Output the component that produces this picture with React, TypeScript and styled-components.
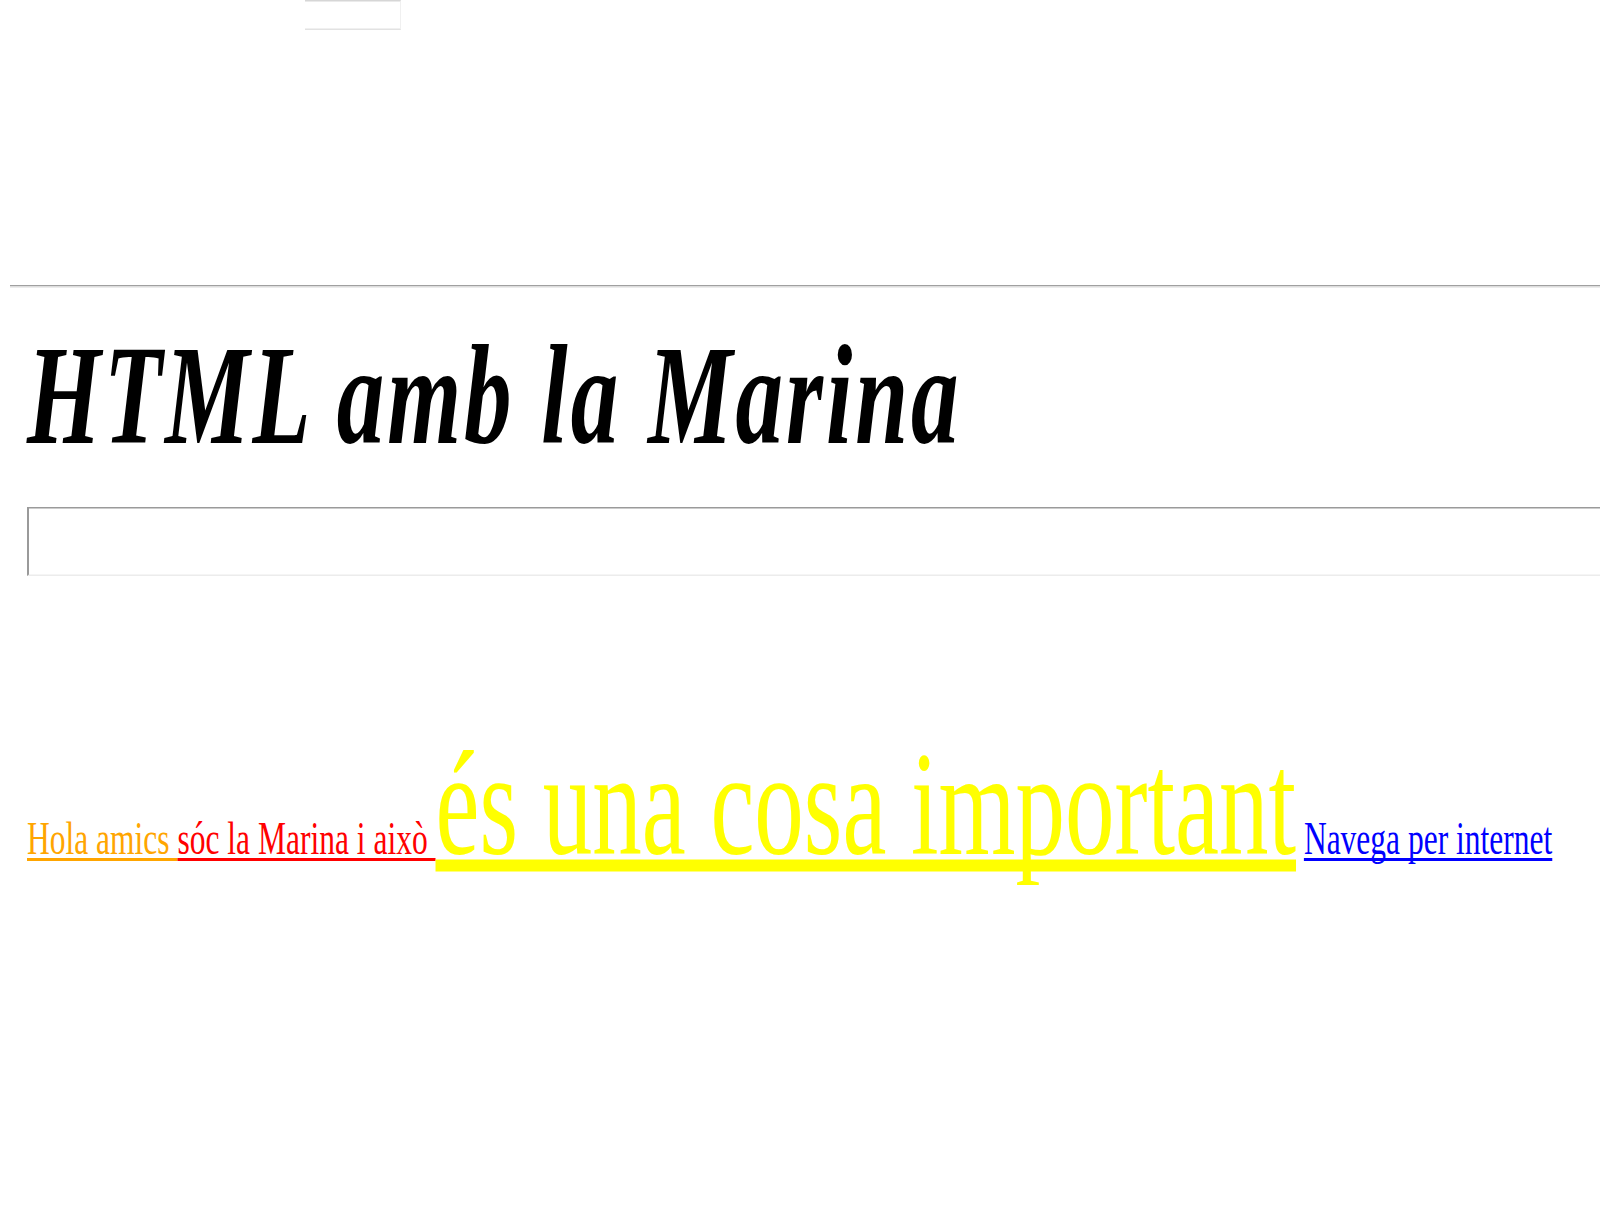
import styled, { createGlobalStyle } from "styled-components";

const GlobalStyle = createGlobalStyle`
    html, body {
        margin: 0;
        padding: 0;
        background: #ffffff;
    }
    body {
        overflow: hidden;
        font-family: "Liberation Serif", "Times New Roman", serif;
    }
`;

const Viewport = styled.div`
    height: 1229px;
    overflow: hidden;
`;

// the reference is stretched vertically, so the whole page is laid out
// at its natural size and then scaled 1.5x in height
const Page = styled.div`
    width: 1600px;
    transform: scaleY(1.5);
    transform-origin: top left;
    padding-left: 10px;
    box-sizing: border-box;
    font-family: "Liberation Serif", "Times New Roman", serif;
`;

const TopStrip = styled.div`
    margin-left: 295px;
    width: 95px;
    height: 18px;
    border-top: 1px solid #d6d6d6;
    border-bottom: 1px solid #e2e2e2;
    border-right: 1px solid #f0f0f0;
`;

const Rule = styled.hr`
    margin: 170px -20px 0 0;
    height: 0;
    border: none;
    border-top: 1.4px solid #a0a0a0;
    border-bottom: 0.7px solid #ececec;
`;

const Content = styled.div`
    padding-left: 17px;
`;

const Title = styled.h1`
    margin: 24px 0 0;
    font-family: "Liberation Serif", "Times New Roman", serif;
    font-size: 95px;
    letter-spacing: 3px;
    line-height: 1;
    font-weight: bold;
    font-style: italic;
    color: #000000;
`;

const Frame = styled.div`
    margin: 26.5px -20px 0 0;
    height: 46px;
    box-sizing: border-box;
    border-top: 1.4px solid #9a9a9a;
    border-left: 2px solid #9a9a9a;
    border-bottom: 1px solid #ececec;
`;

const Line = styled.p`
    margin: 102px 0 0;
    font-family: "Liberation Serif", "Times New Roman", serif;
    font-size: 31.5px;
    line-height: 1;
    white-space: nowrap;
`;

const Piece = styled.span<{ $color: string; $big?: boolean }>`
    color: ${props => props.$color};
    font-size: ${props => (props.$big ? "99px" : "31.5px")};
    text-decoration: underline;
    text-decoration-color: ${props => props.$color};
    text-decoration-thickness: ${props => (props.$big ? "8px" : "1.8px")};
    text-underline-offset: ${props => (props.$big ? "4px" : "2.6px")};
    text-decoration-skip-ink: none;
`;

const WebLink = styled.a`
    color: #0000ff;
    text-decoration: underline;
    text-decoration-thickness: 1.8px;
    text-underline-offset: 2.6px;
    text-decoration-skip-ink: none;
`;

export default function App() {
    return (
        <>
            <GlobalStyle />
            <Viewport>
                <Page>
                    <TopStrip />
                    <Rule />
                    <Content>
                        <Title>HTML amb la Marina</Title>
                        <Frame />
                        <Line>
                            <Piece $color="#ffa500">Hola amics </Piece>
                            <Piece $color="#ff0000">sóc la Marina i això </Piece>
                            <Piece $color="#ffff00" $big>és una cosa important</Piece>{" "}
                            <WebLink href="#">Navega per internet</WebLink>
                        </Line>
                    </Content>
                </Page>
            </Viewport>
        </>
    );
}
